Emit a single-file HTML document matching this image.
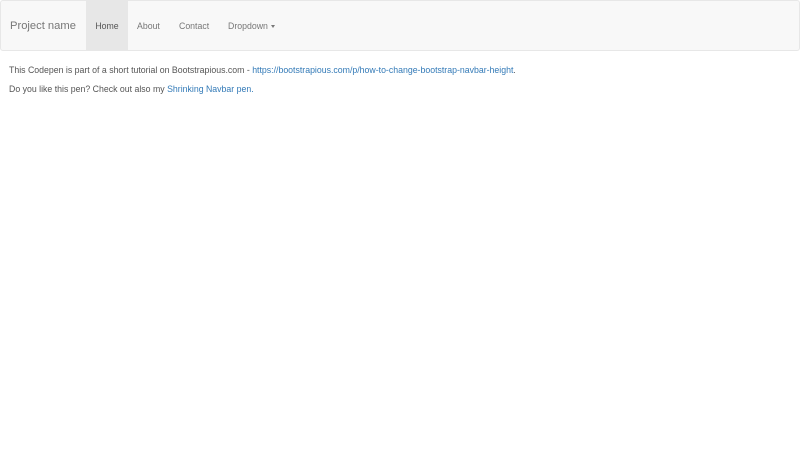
<!DOCTYPE html>
<html><head><style>
body{margin:0;font-family:"Liberation Sans",sans-serif;background:#fff;color:#555;width:800px;height:450px;overflow:hidden}
.nav{position:absolute;left:0;top:0;width:798px;height:49px;background:#f8f8f8;border:1px solid #e7e7e7;border-radius:3px}
.nav span{position:absolute;top:0;height:49px;line-height:50px;font-size:8.75px;color:#777}
.brand{font-size:11.2px!important;left:9px}
.active{background:#e7e7e7;color:#555!important;left:85px;width:42px;text-align:center}
.caret{display:inline-block;width:0;height:0;border-left:2.5px solid transparent;border-right:2.5px solid transparent;border-top:3px solid #777;vertical-align:middle;margin-left:3px}
p{position:absolute;left:9px;margin:0;font-size:8.75px;color:#555}
a{color:#337ab7;text-decoration:none}
</style></head><body>
<div class="nav">
<span class="brand">Project name</span>
<span class="active">Home</span>
<span style="left:136px">About</span>
<span style="left:178px">Contact</span>
<span style="left:227px">Dropdown<i class="caret"></i></span>
</div>
<p style="top:65px">This Codepen is part of a short tutorial on Bootstrapious.com - <a>https://bootstrapious.com/p/how-to-change-bootstrap-navbar-height</a>.</p>
<p style="top:84px">Do you like this pen? Check out also my <a>Shrinking Navbar pen.</a></p>
</body></html>
